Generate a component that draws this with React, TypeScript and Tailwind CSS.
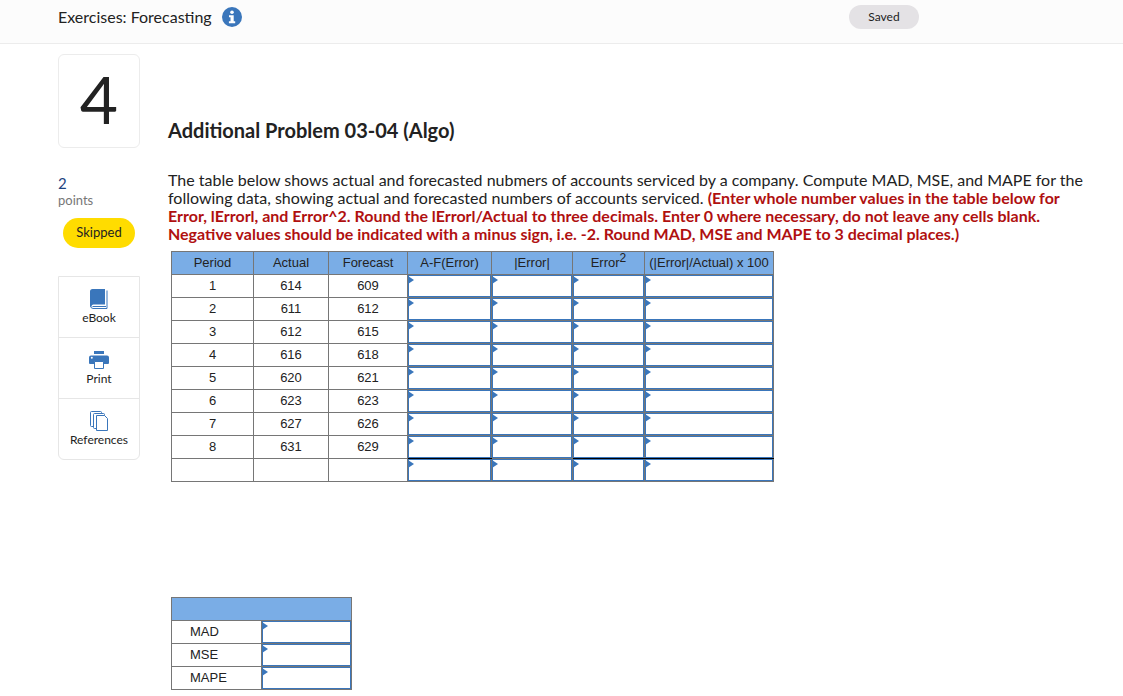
import type { ReactNode } from "react";

type Period = {
  period: number;
  actual: number;
  forecast: number;
};

const periods: Period[] = [
  { period: 1, actual: 614, forecast: 609 },
  { period: 2, actual: 611, forecast: 612 },
  { period: 3, actual: 612, forecast: 615 },
  { period: 4, actual: 616, forecast: 618 },
  { period: 5, actual: 620, forecast: 621 },
  { period: 6, actual: 623, forecast: 623 },
  { period: 7, actual: 627, forecast: 626 },
  { period: 8, actual: 631, forecast: 629 }
];

const answerColumns = ["A-F(Error)", "|Error|", "Error squared", "Percent error"];
const measures = ["MAD", "MSE", "MAPE"];

function InfoIcon() {
  return (
    <svg aria-hidden="true" className="block" height="20" viewBox="0 0 20 20" width="20">
      <circle cx="10" cy="10" fill="#3a76bb" r="10" />
      <circle cx="10" cy="5.2" fill="#fff" r="1.8" />
      <path d="M7 8.200h4.700v6h1.500v2.100H6.900v-2.100h1.600v-3.900H7z" fill="#fff" />
    </svg>
  );
}

function BookIcon() {
  return (
    <svg aria-hidden="true" height="20" viewBox="0 0 18 20" width="18">
      <path d="M2.500 0H15v15.500H3.500A2 2 0 0 0 1.500 17.500H0V2.500A2.500 2.500 0 0 1 2.500 0z" fill="#3a76bb" />
      <path d="M16 17.500H2.500" fill="none" stroke="#3a76bb" />
      <path d="M0.500 16.500A2.800 2.800 0 0 0 3 19.500h14V1.500" fill="none" stroke="#3a76bb" />
    </svg>
  );
}

function PrintIcon() {
  return (
    <svg aria-hidden="true" height="18" viewBox="0 0 20 18" width="20">
      <path d="M5 0h10v3H5zM2 4.500h16a2 2 0 0 1 2 2V12a1 1 0 0 1-1 1H1a1 1 0 0 1-1-1V6.500a2 2 0 0 1 2-2z" fill="#3a76bb" />
      <circle cx="2.800" cy="6.800" fill="#fff" r="1" />
      <path d="M5.500 10.500h9v7h-9z" fill="#fff" stroke="#3a76bb" />
    </svg>
  );
}

function ReferencesIcon() {
  return (
    <svg aria-hidden="true" fill="#fff" height="20" stroke="#3a76bb" viewBox="0 0 18 20" width="18">
      <rect height="15" rx="1" width="11" x="0.500" y="0.500" />
      <rect height="15" rx="1" width="11" x="3.500" y="2.500" />
      <path d="M6.500 4.500h8l3 3v12h-11z" />
    </svg>
  );
}

function ToolButton({ icon, label }: { icon: ReactNode; label: string }) {
  return (
    <button
      className="flex h-[61px] w-full flex-col items-center border-b border-[#e6e6e6] pt-3 last:h-[60px] last:border-b-0"
      type="button"
    >
      <span className="flex h-5 items-center">{icon}</span>
      <span className="text-[12px] leading-[18px]">{label}</span>
    </button>
  );
}

function AnswerCell({ label, heavy = false }: { label: string; heavy?: boolean }) {
  return (
    <td className={heavy ? "border border-[#767676] border-b-black p-0" : "border border-[#767676] p-0"}>
      <div className="relative">
        <input aria-label={label} className="block h-[22px] w-full border border-[#3a76bb] bg-white px-2 outline-none" type="text" />
        <svg aria-hidden="true" className="absolute top-px left-0" height="8" viewBox="0 0 6 8" width="6">
          <path d="M0 0l6 4L0 8z" fill="#3a76bb" />
        </svg>
      </div>
    </td>
  );
}

function ErrorTable() {
  const th = "h-[23px] border border-[#767676] p-0 font-normal whitespace-nowrap";
  const td = "h-[23px] border border-[#767676] p-0";

  return (
    <table className="w-[603px] table-fixed border-collapse bg-white text-center font-['Liberation_Sans',Arial,sans-serif] text-[13px] leading-[22px]">
      <colgroup>
        <col className="w-[82px]" />
        <col className="w-[75px]" />
        <col className="w-[79px]" />
        <col className="w-[84px]" />
        <col className="w-[81px]" />
        <col className="w-[72px]" />
        <col />
      </colgroup>
      <thead className="bg-[#7aade6]">
        <tr>
          <th className={th}>Period</th>
          <th className={th}>Actual</th>
          <th className={th}>Forecast</th>
          <th className={th}>A-F(Error)</th>
          <th className={th}>|Error|</th>
          <th className={th}>
            Error<sup className="static align-super text-[12px]">2</sup>
          </th>
          <th className={th}>(|Error|/Actual) x 100</th>
        </tr>
      </thead>
      <tbody>
        {periods.map((row) => (
          <tr key={row.period}>
            <td className={td}>{row.period}</td>
            <td className={td}>{row.actual}</td>
            <td className={td}>{row.forecast}</td>
            {answerColumns.map((column) => (
              <AnswerCell
                heavy={row.period === 8 && column !== "|Error|"}
                key={column}
                label={`${column}, period ${row.period}`}
              />
            ))}
          </tr>
        ))}
        <tr>
          <td className={td} />
          <td className={td} />
          <td className={td} />
          {answerColumns.map((column) => (
            <AnswerCell key={column} label={`${column}, total`} />
          ))}
        </tr>
      </tbody>
    </table>
  );
}

function MeasureTable() {
  return (
    <table className="w-[181px] table-fixed border-collapse bg-white text-left font-['Liberation_Sans',Arial,sans-serif] text-[13px] leading-[22px]">
      <thead className="bg-[#7aade6]">
        <tr>
          <td className="h-[23px] border border-[#767676] p-0" colSpan={2} />
        </tr>
      </thead>
      <tbody>
        {measures.map((measure) => (
          <tr key={measure}>
            <th className="h-[23px] border border-[#767676] py-0 pr-0 pl-[18px] font-normal">{measure}</th>
            <AnswerCell label={measure} />
          </tr>
        ))}
      </tbody>
    </table>
  );
}

export default function App() {
  return (
    <div className="min-h-screen bg-white font-[Lato,sans-serif] text-[#222]">
      <header className="flex h-11 items-start justify-between border-b border-[#ececec] bg-[#fcfcfc] pr-[204px] pl-[58px]">
        <div className="flex items-center gap-[10px] pt-[7px]">
          <h1 className="text-[16px] leading-5">Exercises: Forecasting</h1>
          <button aria-label="Assignment information" type="button">
            <InfoIcon />
          </button>
        </div>
        <div className="mt-[5px] flex h-6 w-[70px] items-center justify-center rounded-full bg-[#e4e2e5] text-[12px]">Saved</div>
      </header>

      <div className="flex items-start gap-7 pt-[10px] pr-8 pb-1 pl-[58px]">
        <aside className="w-[82px] shrink-0">
          <div className="flex h-[94px] items-center justify-center rounded-md border border-[#ececec] pb-1 text-[66px] leading-none">
            4
          </div>
          <div className="mt-[26px] text-[15px] leading-[18px] text-[#1f4480]">2</div>
          <div className="text-[13px] leading-4 text-[#777]">points</div>
          <div className="mx-auto mt-[10px] flex h-[30px] w-[72px] items-center justify-center rounded-full bg-[#ffdc00] text-[13px]">
            Skipped
          </div>
          <nav aria-label="Resources" className="mt-7 rounded-b-md border border-[#e6e6e6]">
            <ToolButton icon={<BookIcon />} label="eBook" />
            <ToolButton icon={<PrintIcon />} label="Print" />
            <ToolButton icon={<ReferencesIcon />} label="References" />
          </nav>
        </aside>

        <main className="min-w-0 flex-1 pt-[65px]">
          <h2 className="text-[20px] leading-[22px] font-bold">Additional Problem 03-04 (Algo)</h2>
          <p className="mt-[30px] text-[16px] leading-[18px]">
            The table below shows actual and forecasted nubmers of accounts serviced by a company. Compute MAD, MSE, and MAPE for the
            <br />
            following data, showing actual and forecasted numbers of accounts serviced.{" "}
            <strong className="text-[#b01010]">
              (Enter whole number values in the table below for
              <br />
              Error, lErrorl, and Error^2. Round the lErrorl/Actual to three decimals. Enter 0 where necessary, do not leave any cells blank.
              <br />
              Negative values should be indicated with a minus sign, i.e. -2. Round MAD, MSE and MAPE to 3 decimal places.)
            </strong>
          </p>
          <div className="mt-2 flex flex-col gap-[115px] pl-[3px]">
            <ErrorTable />
            <MeasureTable />
          </div>
        </main>
      </div>
    </div>
  );
}
